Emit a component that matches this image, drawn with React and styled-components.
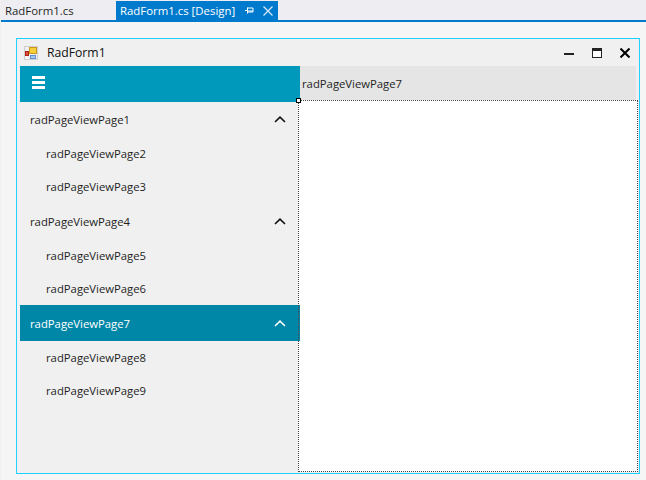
import styled, { createGlobalStyle } from "styled-components";

const GlobalStyle = createGlobalStyle`
  html, body { margin: 0; padding: 0; }
  body {
    background: #f5f5f5;
    font-family: "Open Sans", "Noto Sans", "Liberation Sans", sans-serif;
    color: #1e1e1e;
    overflow: hidden;
  }
`;

const groups = [
  { title: "radPageViewPage1", items: ["radPageViewPage2", "radPageViewPage3"] },
  { title: "radPageViewPage4", items: ["radPageViewPage5", "radPageViewPage6"] },
  { title: "radPageViewPage7", items: ["radPageViewPage8", "radPageViewPage9"], active: true },
];

function FormIcon() {
  return (
    <svg width="14" height="14" viewBox="0 0 14 14" shapeRendering="crispEdges">
      <rect x="0" y="0" width="14" height="14" fill="#cfcfcf" />
      <rect x="1" y="1" width="12" height="12" fill="#efefef" />
      <rect x="5" y="1" width="8" height="7" fill="#c99a1e" />
      <rect x="6" y="2" width="6" height="5" fill="#f8cf3a" />
      <rect x="1" y="5" width="4" height="5" fill="#a82018" />
      <rect x="2" y="6" width="2" height="3" fill="#e0503c" />
      <rect x="6" y="9" width="6" height="4" fill="#5f8fd6" />
      <rect x="7" y="10" width="4" height="2" fill="#a9c6ee" />
      <rect x="2" y="11" width="2" height="2" fill="#fff" />
    </svg>
  );
}

function Chevron({ color }) {
  return (
    <svg width="12" height="7" viewBox="0 0 12 7">
      <path d="M1 6 L6 1.2 L11 6" fill="none" stroke={color} strokeWidth="1.6" />
    </svg>
  );
}

function PinIcon() {
  return (
    <svg width="9" height="9" viewBox="0 0 9 9">
      <path d="M0 4.5H2.5M2.5 1.5V7.5M2.5 2H8V6H2.5M2.5 5H8" fill="none" stroke="#fff" strokeWidth="1" />
    </svg>
  );
}

function CloseIcon({ size, color, weight }) {
  return (
    <svg width={size} height={size} viewBox="0 0 10 10">
      <path d="M0.5 0.5L9.5 9.5M9.5 0.5L0.5 9.5" fill="none" stroke={color} strokeWidth={weight} />
    </svg>
  );
}

export default function App() {
  return (
    <Page>
      <GlobalStyle />
      <TabStrip>
        <Tab>RadForm1.cs</Tab>
        <ActiveTab>
          RadForm1.cs [Design]
          <TabIcons>
            <PinIcon />
            <CloseIcon size={10} color="#d6e8f7" weight={1.3} />
          </TabIcons>
        </ActiveTab>
      </TabStrip>
      <Surface>
        <Form>
          <TitleBar>
            <FormIcon />
            <FormTitle>RadForm1</FormTitle>
            <WindowButtons>
              <MinButton />
              <MaxButton />
              <CloseIcon size={10} color="#000" weight={2} />
            </WindowButtons>
          </TitleBar>
          <FormBody>
            <Sidebar>
              <Hamburger>
                <span />
                <span />
                <span />
              </Hamburger>
              <GroupList>
                {groups.map((g) => (
                  <div key={g.title}>
                    <GroupHeader $active={g.active}>
                      {g.title}
                      <Chevron color={g.active ? "#fff" : "#111"} />
                    </GroupHeader>
                    {g.items.map((item) => (
                      <SubItem key={item}>{item}</SubItem>
                    ))}
                  </div>
                ))}
              </GroupList>
            </Sidebar>
            <Content>
              <PageHeader>radPageViewPage7</PageHeader>
              <PageArea>
                <SelectionFrame />
                <Handle />
              </PageArea>
            </Content>
          </FormBody>
        </Form>
      </Surface>
    </Page>
  );
}

const Page = styled.div`
  width: 646px;
  height: 480px;
  display: flex;
  flex-direction: column;
  border-left: 1px solid #f0f0f0;
  box-sizing: border-box;
`;

const TabStrip = styled.div`
  height: 22px;
  box-sizing: border-box;
  display: flex;
  align-items: flex-end;
  border-bottom: 2px solid #007acc;
  background: #eeeef2;
  flex: none;
`;

const Tab = styled.div`
  width: 115px;
  height: 19px;
  box-sizing: border-box;
  padding-left: 4px;
  font-size: 11.4px;
  line-height: 19px;
  white-space: nowrap;
  color: #1e1e1e;
`;

const ActiveTab = styled(Tab)`
  width: 162px;
  display: flex;
  align-items: center;
  background: #007acc;
  color: #fff;
`;

const TabIcons = styled.div`
  display: flex;
  align-items: center;
  gap: 9px;
  margin-left: 10px;
`;

const Surface = styled.div`
  flex: 1;
  padding: 16px 6px 6px 15px;
  min-height: 0;
`;

const Form = styled.div`
  width: 624px;
  height: 436px;
  box-sizing: border-box;
  border: 1px solid #1fd0ff;
  background: #f0f0f0;
  display: flex;
  flex-direction: column;
  padding: 0 1px 1px 3px;
`;

const TitleBar = styled.div`
  height: 27px;
  flex: none;
  display: flex;
  align-items: center;
  padding-left: 4px;
`;

const FormTitle = styled.span`
  margin-left: 9px;
  font-size: 12.2px;
  color: #111;
`;

const WindowButtons = styled.div`
  margin-left: auto;
  display: flex;
  align-items: center;
  gap: 18px;
  padding-right: 8px;
`;

const MinButton = styled.div`
  width: 10px;
  height: 2px;
  margin-top: 3px;
  background: #222;
`;

const MaxButton = styled.div`
  width: 10px;
  height: 10px;
  box-sizing: border-box;
  border: 1px solid #222;
  border-top-width: 3px;
  background: #fff;
`;

const FormBody = styled.div`
  flex: 1;
  display: flex;
  min-height: 0;
`;

const Sidebar = styled.div`
  width: 280px;
  flex: none;
  display: flex;
  flex-direction: column;
  position: relative;
  z-index: 1;
`;

const Hamburger = styled.div`
  height: 36px;
  flex: none;
  background: #0099bc;
  display: flex;
  flex-direction: column;
  gap: 2px;
  padding: 10px 0 0 12px;
  box-sizing: border-box;
  span {
    width: 13px;
    height: 3px;
    background: #fff;
  }
`;

const GroupList = styled.div`
  margin-top: -1px;
`;

const GroupHeader = styled.div`
  height: 36px;
  display: flex;
  align-items: center;
  justify-content: space-between;
  padding: 0 14px 0 10px;
  font-size: 11.3px;
  background: ${(p) => (p.$active ? "#0086a6" : "transparent")};
  color: ${(p) => (p.$active ? "#fff" : "#1e1e1e")};
`;

const SubItem = styled.div`
  height: 33px;
  display: flex;
  align-items: center;
  padding-left: 26px;
  font-size: 11.3px;
  color: #1e1e1e;
`;

const Content = styled.div`
  flex: 1;
  min-width: 0;
  margin-left: -2px;
  display: flex;
  flex-direction: column;
`;

const PageHeader = styled.div`
  height: 34px;
  flex: none;
  margin: 0 2px 0 2px;
  background: #e5e5e5;
  display: flex;
  align-items: center;
  padding-left: 2px;
  font-size: 11.3px;
  color: #1e1e1e;
`;

const PageArea = styled.div`
  flex: 1;
  position: relative;
  background: #fff;
`;

const SelectionFrame = styled.div`
  position: absolute;
  inset: 0;
  z-index: 2;
  border: 1px dotted #444;
`;

const Handle = styled.div`
  position: absolute;
  left: -2px;
  top: -2px;
  width: 5px;
  height: 5px;
  z-index: 3;
  box-sizing: border-box;
  background: #fff;
  border: 1px solid #000;
`;
